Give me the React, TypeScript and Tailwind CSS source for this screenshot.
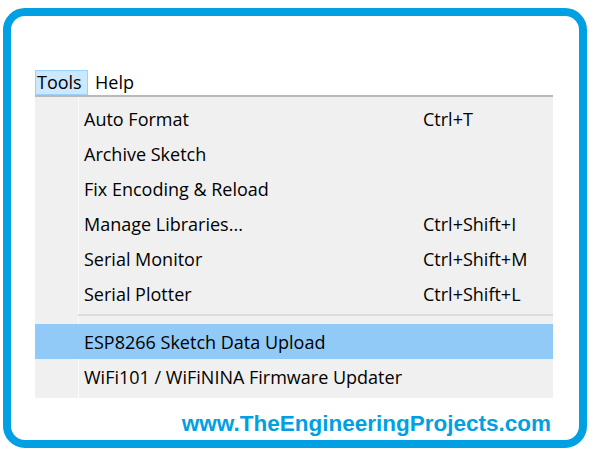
import React from "react";

const items: { label: string; shortcut?: string }[] = [
  { label: "Auto Format", shortcut: "Ctrl+T" },
  { label: "Archive Sketch" },
  { label: "Fix Encoding & Reload" },
  { label: "Manage Libraries...", shortcut: "Ctrl+Shift+I" },
  { label: "Serial Monitor", shortcut: "Ctrl+Shift+M" },
  { label: "Serial Plotter", shortcut: "Ctrl+Shift+L" },
];

function Row({ label, shortcut, active }: { label: string; shortcut?: string; active?: boolean }) {
  return (
    <div className={`flex h-[35px] items-center ${active ? "bg-[#91c9f7]" : ""}`}>
      <span className="ml-[49px] w-[339px] whitespace-nowrap">{label}</span>
      {shortcut && <span className="whitespace-nowrap">{shortcut}</span>}
    </div>
  );
}

export default function App() {
  return (
    <div className="w-[600px] h-[464px] bg-white pt-[8px] pl-[3px]">
      <div
        className="w-[584px] h-[440px] border-[8px] border-[#00a0e3] rounded-[22px] pl-[24px] pt-[54px] flex flex-col"
        style={{ fontFamily: '"Open Sans", "Noto Sans", sans-serif' }}
      >
        <div className="w-[518px] text-[18px] leading-none text-black">
          <div className="flex h-[25px] items-center border-b-2 border-[#b9b9b9] box-content">
            <div className="h-[25px] w-[53px] bg-[#cce8ff] border border-[#99d1ff] flex items-center pl-[1px] pb-[1px]">Tools</div>
            <div className="pl-[7px] pb-[1px]">Help</div>
          </div>
          <div className="relative bg-[#f0f0f0] pt-[4px] pb-[4px]">
            <div className="absolute left-[43px] top-0 bottom-0 w-px bg-[#fafafa]" />
            <div className="relative">
              {items.map((it) => (
                <Row key={it.label} label={it.label} shortcut={it.shortcut} />
              ))}
              <div className="pt-[3px] pb-[8px] pl-[43px]">
                <div className="h-[2px] w-full bg-[#dcdcdc]" />
              </div>
              <Row label="ESP8266 Sketch Data Upload" active />
              <Row label="WiFi101 / WiFiNINA Firmware Updater" />
            </div>
          </div>
        </div>
        <div
          className="mt-[15px] w-[518px] text-right pr-[2px] text-[22.5px] font-bold text-[#00a0e3] leading-none"
          style={{ fontFamily: '"Liberation Sans", Arial, sans-serif' }}
        >
          www.TheEngineeringProjects.com
        </div>
      </div>
    </div>
  );
}
